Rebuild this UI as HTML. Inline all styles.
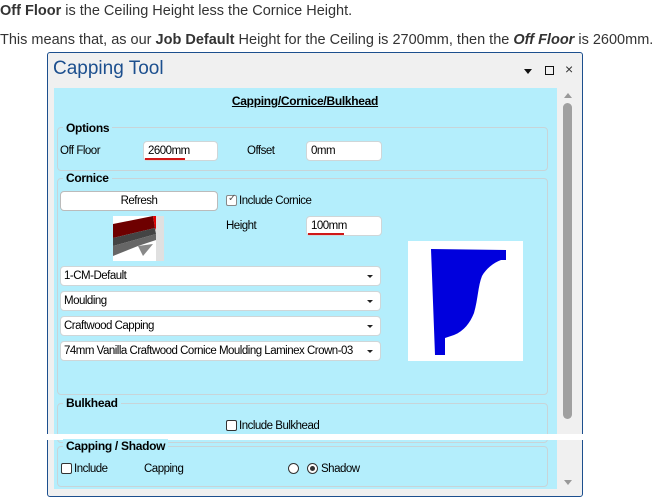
<!DOCTYPE html>
<html><head><style>
*{box-sizing:border-box;margin:0;padding:0}
body{width:654px;height:498px;background:#fff;position:relative;overflow:hidden;font-family:"Liberation Sans",sans-serif;color:#222}
.a{position:absolute}
.t{font-size:14.5px;color:#333;white-space:nowrap}
.n{font-family:"Liberation Sans Narrow","Liberation Sans",sans-serif;font-size:11.5px;color:#000;white-space:nowrap;letter-spacing:-0.5px}
.gb{position:absolute;border:1px solid #c8d4d8;border-radius:4px}
.lg{position:absolute;background:#b4eefc;font-weight:bold;font-size:12px;padding:0 3px;color:#000;font-family:"Liberation Sans",sans-serif;letter-spacing:-0.3px}
.in{position:absolute;background:#fff;border:1px solid #cfd6d8;border-radius:4px;height:20px;padding:3px 0 0 4px}
.dd{position:absolute;background:#fff;border:1px solid #cfd6d8;border-radius:4px;height:20px;left:60px;width:321px;padding:3px 0 0 3px}
.dd:after{content:"";position:absolute;right:7px;top:8px;border-left:3px solid transparent;border-right:3px solid transparent;border-top:3px solid #222}
.cb{position:absolute;width:11px;height:11px;border:1px solid #333;border-radius:2px;background:#fff}
.ul{position:absolute;height:2px;background:#d01818}
</style></head><body>
<div class="a t" style="left:0;top:3px"><b>Off Floor</b> is the Ceiling Height less the Cornice Height.</div>
<div class="a t" style="left:0;top:32px">This means that, as our <b>Job Default</b> Height for the Ceiling is 2700mm, then the <b><i>Off Floor</i></b> is 2600mm.</div>

<div class="a" style="left:47px;top:52px;width:536px;height:445px;border:1px solid #1c4f8e;border-radius:3px;background:#f0f0f0"></div>
<div class="a" style="left:53px;top:58px;font-size:19px;color:#1c4f8e">Capping Tool</div>
<div class="a" style="left:524px;top:69px;border-left:4px solid transparent;border-right:4px solid transparent;border-top:5px solid #111"></div>
<div class="a" style="left:545px;top:66px;width:9px;height:9px;border:1.5px solid #111"></div>
<div class="a" style="left:565px;top:61px;font-size:14px;color:#333">×</div>

<div class="a" style="left:54px;top:88px;width:503px;height:401px;background:#b4eefc"></div>
<div class="a" style="left:557px;top:88px;width:21px;height:401px;background:#f0f0f0"></div>
<div class="a" style="left:563px;top:103px;width:9px;height:316px;background:#a0a0a0;border-radius:5px"></div>
<div class="a" style="left:564px;top:93px;border-left:4px solid transparent;border-right:4px solid transparent;border-bottom:5px solid #999"></div>
<div class="a" style="left:564px;top:480px;border-left:4px solid transparent;border-right:4px solid transparent;border-top:5px solid #999"></div>

<div class="a" style="left:0;width:654px;top:94px;text-align:center;padding-right:44px;font-size:12px;font-weight:bold;text-decoration:underline;color:#000;letter-spacing:-0.3px">Capping/Cornice/Bulkhead</div>

<div class="gb" style="left:57px;top:127px;width:491px;height:44px"></div>
<div class="lg" style="left:63px;top:121px">Options</div>
<div class="a n" style="left:60px;top:145px">Off Floor</div>
<div class="in n" style="left:143px;top:141px;width:75px">2600mm</div>
<div class="ul" style="left:145px;top:158px;width:40px"></div>
<div class="a n" style="left:247px;top:145px">Offset</div>
<div class="in n" style="left:306px;top:141px;width:76px">0mm</div>

<div class="gb" style="left:57px;top:178px;width:491px;height:217px"></div>
<div class="lg" style="left:63px;top:171px">Cornice</div>
<div class="in n" style="left:60px;top:191px;width:158px;text-align:center;padding-left:0;border-color:#bbb">Refresh</div>
<div class="cb" style="left:226px;top:195px;border-color:#888"></div>
<div class="a" style="left:228px;top:193px;font-size:10px;color:#555">✓</div>
<div class="a n" style="left:239px;top:195px">Include Cornice</div>
<div class="a" style="left:113px;top:216px;width:51px;height:45px;background:#fff">
<svg width="51" height="45"><polygon points="0,8 40,0 42,12 0,22" fill="#6e0000"/><polygon points="40,0 43,0 43,14 42,12" fill="#e00000"/><polygon points="0,22 42,12 43,18 0,30" fill="#444"/><polygon points="0,30 43,18 43,24 25,30 0,40" fill="#666"/><polygon points="25,30 40,28 30,40" fill="#888"/><rect x="43" y="0" width="8" height="45" fill="#e0e0e0"/></svg></div>
<div class="a n" style="left:226px;top:220px">Height</div>
<div class="in n" style="left:306px;top:216px;width:76px">100mm</div>
<div class="ul" style="left:308px;top:233px;width:36px"></div>
<div class="dd n" style="top:266px">1-CM-Default</div>
<div class="dd n" style="top:291px">Moulding</div>
<div class="dd n" style="top:316px">Craftwood Capping</div>
<div class="dd n" style="top:341px">74mm Vanilla Craftwood Cornice Moulding Laminex Crown-03</div>
<div class="a" style="left:408px;top:241px;width:115px;height:120px;background:#fff">
<svg width="115" height="120"><path d="M23,8 L98,9 L98,19 L93,19 C85,22 78,28 74,35 C70,45 70,58 66,72 C62,82 56,90 46,94 L37,97 L37,114 L27,114 Z" fill="#0000dd"/></svg></div>

<div class="gb" style="left:57px;top:403px;width:491px;height:40px"></div>
<div class="lg" style="left:63px;top:396px">Bulkhead</div>
<div class="cb" style="left:226px;top:420px"></div>
<div class="a n" style="left:239px;top:420px">Include Bulkhead</div>

<div class="a" style="left:47px;top:434px;width:537px;height:6px;background:#fff"></div>

<div class="gb" style="left:57px;top:446px;width:491px;height:41px"></div>
<div class="lg" style="left:63px;top:439px">Capping / Shadow</div>
<div class="cb" style="left:61px;top:463px"></div>
<div class="a n" style="left:74px;top:463px">Include</div>
<div class="a n" style="left:144px;top:463px">Capping</div>
<div class="a" style="left:288px;top:463px;width:11px;height:11px;border:1px solid #333;border-radius:50%;background:#fff"></div>
<div class="a" style="left:307px;top:463px;width:11px;height:11px;border:1px solid #333;border-radius:50%;background:#fff"></div>
<div class="a" style="left:310px;top:466px;width:5px;height:5px;border-radius:50%;background:#333"></div>
<div class="a n" style="left:321px;top:463px">Shadow</div>
</body></html>
